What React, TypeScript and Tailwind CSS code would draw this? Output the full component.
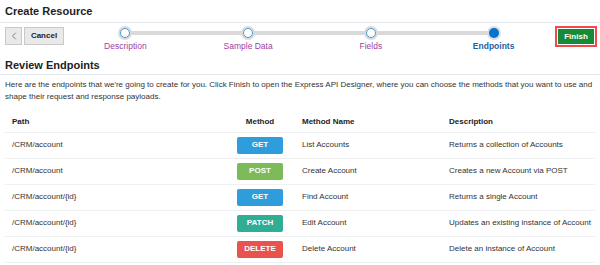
import { ChevronLeft } from "lucide-react";

type Endpoint = {
  path: string;
  method: "GET" | "POST" | "PATCH" | "DELETE";
  name: string;
  description: string;
};

const ENDPOINTS: Endpoint[] = [
  { path: "/CRM/account", method: "GET", name: "List Accounts", description: "Returns a collection of Accounts" },
  { path: "/CRM/account", method: "POST", name: "Create Account", description: "Creates a new Account via POST" },
  { path: "/CRM/account/{id}", method: "GET", name: "Find Account", description: "Returns a single Account" },
  { path: "/CRM/account/{id}", method: "PATCH", name: "Edit Account", description: "Updates an existing instance of Account" },
  { path: "/CRM/account/{id}", method: "DELETE", name: "Delete Account", description: "Delete an instance of Account" },
];

const METHOD_COLORS: Record<Endpoint["method"], string> = {
  GET: "bg-[#2d9ddb]",
  POST: "bg-[#7cba5a]",
  PATCH: "bg-[#30ae95]",
  DELETE: "bg-[#e9524d]",
};

const STEPS = ["Description", "Sample Data", "Fields", "Endpoints"];

function Train() {
  return (
    <div className="relative grid flex-1 grid-cols-4">
      {/* the rail sits behind the stops, from first centre to last */}
      <div className="absolute left-[12.5%] right-[12.5%] top-[5px] h-[4px] bg-[#d9d9d9]" />
      {STEPS.map((step, i) => {
        const current = i === STEPS.length - 1;
        return (
          <div key={step} className="relative flex flex-col items-center">
            <div className="flex h-[14px] w-[14px] items-center justify-center rounded-full bg-[#dcdcdc]">
              {current ? (
                <div className="h-[10px] w-[10px] rounded-full bg-[#0572ce]" />
              ) : (
                <div className="h-[10px] w-[10px] rounded-full border-[1.5px] border-[#4a9ad8] bg-white" />
              )}
            </div>
            <span
              className={
                current
                  ? "mt-[1px] text-[8.5px] font-bold leading-[10px] text-[#1f5fa6]"
                  : "mt-[1px] text-[8.5px] leading-[10px] text-[#a23ea0]"
              }
            >
              {step}
            </span>
          </div>
        );
      })}
    </div>
  );
}

export default function App() {
  return (
    <div className="h-[265px] w-[600px] overflow-hidden bg-white font-['Liberation_Sans',Arial,sans-serif] text-[#333]">
      <h1 className="border-b border-[#e3e9ef] px-[5px] pb-[5px] pt-[6px] text-[11px] font-bold leading-[11px] text-[#222]">
        Create Resource
      </h1>

      <div className="flex items-start pl-[5px] pr-[3px] pt-[3px]">
        <div className="flex gap-[2px] pt-[1px]">
          <button className="flex h-[18px] w-[17px] items-center justify-center border border-[#c9c9c9] bg-[#e9e9e9] text-[#666]">
            <ChevronLeft size={12} strokeWidth={1.6} />
          </button>
          <button className="h-[18px] w-[40px] border border-[#c9c9c9] bg-[#e9e9e9] text-[8px] font-bold text-[#222]">
            Cancel
          </button>
        </div>
        <div className="flex flex-1">
          <Train />
        </div>
        <div className="border-2 border-[#ef4b4b] p-[1px]">
          <div className="flex h-[15px] w-[36px] items-center justify-center bg-[#168a36] text-[8px] font-bold text-white">
            Finish
          </div>
        </div>
      </div>

      <h2 className="mt-[8px] border-b border-[#e3e9ef] px-[5px] pb-[3px] text-[11px] font-bold leading-[12px] text-[#222]">
        Review Endpoints
      </h2>

      <p className="px-[5px] pt-[4px] text-[8px] leading-[12px] text-[#333]">
        Here are the endpoints that we're going to create for you. Click Finish to open the Express API Designer, where you
        can choose the methods that you want to use and shape their request and response payloads.
      </p>

      <table className="mx-[5px] mt-[9px] w-[590px] border-collapse text-[8px]">
        <thead>
          <tr className="h-[20px] border-b border-[#eef0f2] text-left font-bold text-[#222]">
            <th className="w-[220px] pl-[7px]">Path</th>
            <th className="w-[70px] text-center">Method</th>
            <th className="w-[147px] pl-[7px]">Method Name</th>
            <th className="pl-[7px]">Description</th>
          </tr>
        </thead>
        <tbody>
          {ENDPOINTS.map((ep, i) => (
            <tr key={i} className="h-[26px] border-b border-[#eef0f2]">
              <td className="pl-[7px]">{ep.path}</td>
              <td>
                <div
                  className={`mx-auto flex h-[17px] w-[46px] items-center justify-center rounded-[2px] text-[8px] font-bold text-white ${METHOD_COLORS[ep.method]}`}
                >
                  {ep.method}
                </div>
              </td>
              <td className="pl-[7px]">{ep.name}</td>
              <td className="pl-[7px]">{ep.description}</td>
            </tr>
          ))}
        </tbody>
      </table>
    </div>
  );
}
